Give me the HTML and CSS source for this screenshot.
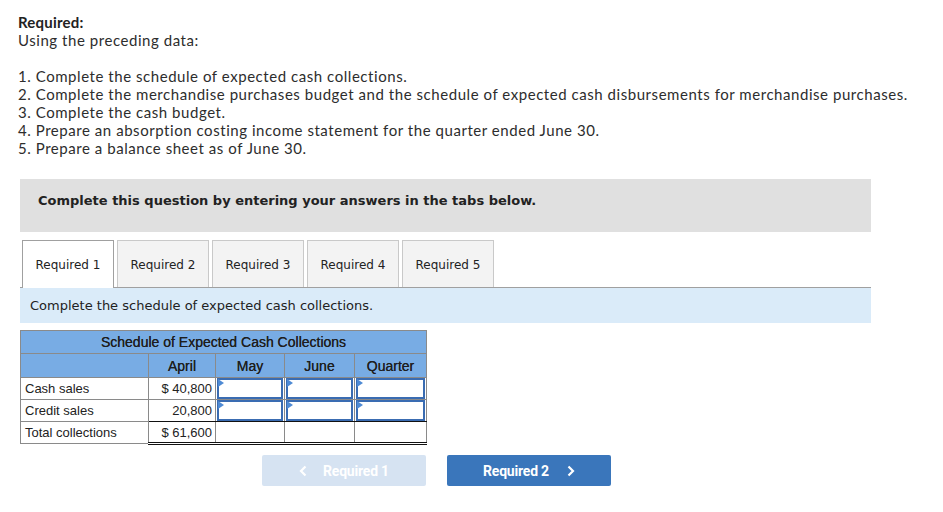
FILE: index.html
```html
<!DOCTYPE html>
<html>
<head>
<meta charset="utf-8">
<link rel="stylesheet" href="styles.css">
</head>
<body>
<div class="page">
  <div class="intro">
    <div class="req-title">Required:</div>
    <div>Using the preceding data:</div>
    <div class="blank">&nbsp;</div>
    <div>1. Complete the schedule of expected cash collections.</div>
    <div>2. Complete the merchandise purchases budget and the schedule of expected cash disbursements for merchandise purchases.</div>
    <div>3. Complete the cash budget.</div>
    <div>4. Prepare an absorption costing income statement for the quarter ended June 30.</div>
    <div>5. Prepare a balance sheet as of June 30.</div>
  </div>

  <div class="instruct">Complete this question by entering your answers in the tabs below.</div>

  <div class="tabs">
    <div class="tab active">Required 1</div>
    <div class="tab">Required 2</div>
    <div class="tab">Required 3</div>
    <div class="tab">Required 4</div>
    <div class="tab">Required 5</div>
  </div>
  <div class="panel">Complete the schedule of expected cash collections.</div>

  <table class="sched">
    <colgroup>
      <col class="c0"><col class="c1"><col class="c2"><col class="c3"><col class="c4">
    </colgroup>
    <tr class="title-row"><th colspan="5">Schedule of Expected Cash Collections</th></tr>
    <tr class="head-row"><th class="blank-h"></th><th>April</th><th>May</th><th>June</th><th>Quarter</th></tr>
    <tr class="r1">
      <td class="lbl">Cash sales</td><td class="num">$ 40,800</td>
      <td class="inp"><div class="box"><span class="tri"></span></div></td>
      <td class="inp"><div class="box"><span class="tri"></span></div></td>
      <td class="inp"><div class="box"><span class="tri"></span></div></td>
    </tr>
    <tr class="r2">
      <td class="lbl">Credit sales</td><td class="num">20,800</td>
      <td class="inp"><div class="box"><span class="tri"></span></div></td>
      <td class="inp"><div class="box"><span class="tri"></span></div></td>
      <td class="inp"><div class="box"><span class="tri"></span></div></td>
    </tr>
    <tr class="r3">
      <td class="lbl">Total collections</td><td class="num tot">$ 61,600</td>
      <td class="tot"></td><td class="tot"></td><td class="tot"></td>
    </tr>
  </table>

  <div class="nav">
    <div class="btn prev"><svg class="chev" width="8" height="12" viewBox="0 0 8 12"><path d="M6.5 1.5 L2 6 L6.5 10.5" fill="none" stroke="#fff" stroke-width="2.2"/></svg>Required 1</div>
    <div class="btn next">Required 2<svg class="chev r" width="8" height="12" viewBox="0 0 8 12"><path d="M1.5 1.5 L6 6 L1.5 10.5" fill="none" stroke="#fff" stroke-width="2.2"/></svg></div>
  </div>
</div>
</body>
</html>
```

FILE: styles.css
```css
html, body { margin: 0; padding: 0; background: #fff; }
.page { padding: 13px 0 0 0; width: 943px; }
.intro {
  font-family: Lato, "Open Sans", sans-serif;
  font-size: 15px;
  letter-spacing: 0.55px;
  line-height: 18px;
  color: #2d2d2d;
  padding-left: 18px;
}
.req-title { font-weight: bold; color: #222; letter-spacing: 0.2px; }
.instruct {
  margin: 22px 0 0 20px;
  width: 851px;
  height: 53px;
  box-sizing: border-box;
  background: #e0e0e0;
  padding: 13px 0 0 18px;
  font-family: "DejaVu Sans", Verdana, sans-serif;
  font-weight: bold;
  font-size: 13px;
  line-height: 18px;
  color: #222;
}
.tabs {
  margin: 8px 0 0 20px;
  width: 851px;
  display: flex;
  gap: 3px;
  padding-left: 2px;
  box-sizing: border-box;
  border-bottom: 1px solid #a0a0a0;
  height: 48px;
}
.tab {
  width: 92px;
  height: 47px;
  box-sizing: border-box;
  border: 1px solid #c9c9c9;
  border-bottom: none;
  background: #f3f3f3;
  font-family: "DejaVu Sans", Verdana, sans-serif;
  font-size: 12px;
  color: #222;
  display: flex;
  align-items: center;
  justify-content: center;
  padding-top: 1px;
}
.tab.active {
  background: #fff;
  border-color: #a0a0a0;
  height: 48px;
  margin-bottom: -1px;
}
.panel {
  margin-left: 20px;
  width: 851px;
  height: 35px;
  box-sizing: border-box;
  background: #daebf9;
  padding: 9px 0 0 10px;
  font-family: "DejaVu Sans", Verdana, sans-serif;
  font-size: 13px;
  line-height: 18px;
  color: #222;
}
.sched {
  margin: 7px 0 0 20px;
  border-collapse: collapse;
  table-layout: fixed;
  width: 406px;
  font-family: "Liberation Sans", Arial, sans-serif;
  font-size: 13px;
  color: #222;
}
.c0 { width: 128px; } .c1 { width: 67px; } .c2 { width: 69px; } .c3 { width: 70px; } .c4 { width: 72px; }
.sched th, .sched td { padding: 0; border: 1px solid #8a8a8a; }
.title-row th, .head-row th {
  background: #78ace4;
  font-weight: normal;
  font-size: 14px;
  text-shadow: 0 0 0.6px #222;
  text-align: center;
  color: #1e1e1e;
}
.title-row th { height: 22px; }
.head-row th { height: 23px; }
.r1 td, .r2 td { height: 21px; }
.r3 td { height: 20px; }
.lbl { padding-left: 4px !important; text-align: left; }
.num { text-align: right; padding-right: 3px !important; }
.inp { position: relative; }
.box {
  height: 21px;
  margin: 0 1px;
  box-sizing: border-box;
  border: 2px solid #3a6cb2;
  position: relative;
}
.tri {
  position: absolute;
  left: -1px; top: -1px;
  width: 0; height: 0;
  border-top: 4px solid transparent;
  border-bottom: 4px solid transparent;
  border-left: 6px solid #4e8ad4;
}
.r2 .num, .r2 .inp { border-bottom: 1px solid #111; }
.r3 td.tot { border-top: 1px solid #111; border-bottom: 3px double #111; }
.nav {
  margin: 10px 0 0 262px;
  display: flex;
  gap: 21px;
}
.btn {
  width: 164px;
  height: 31px;
  border-radius: 2px;
  font-family: Roboto, "Liberation Sans", sans-serif;
  font-weight: bold;
  font-size: 14px;
  color: #fff;
  display: flex;
  align-items: center;
  justify-content: center;
  letter-spacing: -0.2px;
}
.prev { background: #d6e3f2; }
.next { background: #3a76bb; }
.chev { margin-right: 16px; }
.chev.r { margin-right: 0; margin-left: 18px; }
```
